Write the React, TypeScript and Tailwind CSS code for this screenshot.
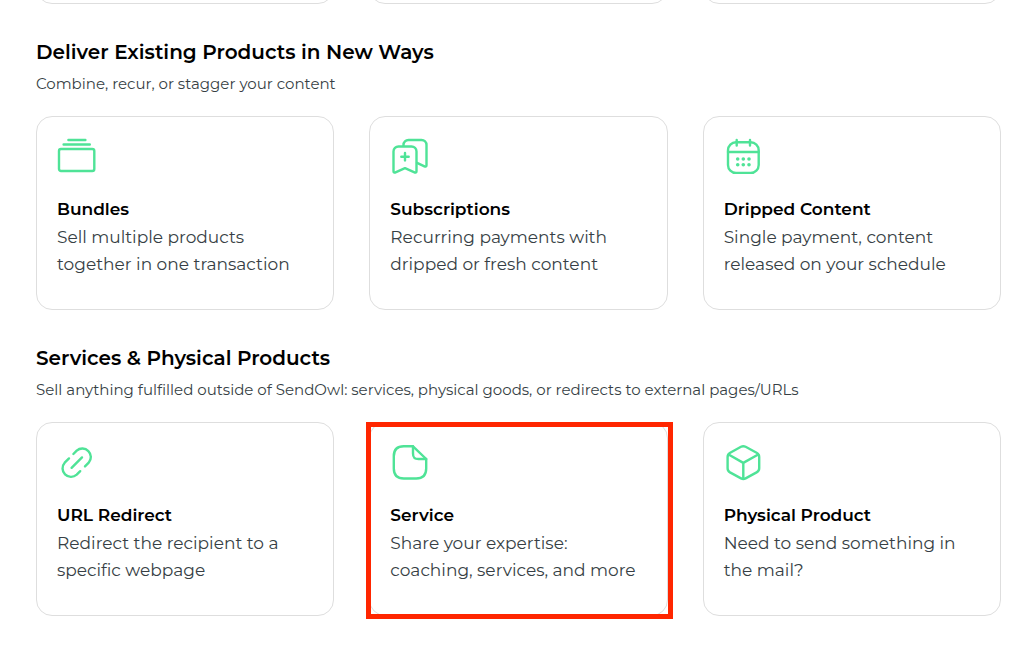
import { ReactNode } from "react"

type Product = {
    title: string
    description: string
    icon: ReactNode
    highlighted?: boolean
}

function Icon({ children }: { children: ReactNode }) {
    return (
        <svg
            viewBox="0 0 40 40"
            className="size-10 text-[#4fe397]"
            fill="none"
            stroke="currentColor"
            strokeWidth={2.4}
            strokeLinecap="round"
            strokeLinejoin="round"
            aria-hidden="true"
        >
            {children}
        </svg>
    )
}

const BundleIcon = (
    <Icon>
        <rect x="2" y="12" width="35.3" height="22" rx="2" />
        <path d="M6.6 7.5h26.2M11.4 3h17" />
    </Icon>
)

const SubscriptionIcon = (
    <Icon>
        <path d="M13.5 8.8V8a5 5 0 0 1 5-5h13a5 5 0 0 1 5 5v20.2c0 1.3-1 1.7-2 1.2L27 25.8" />
        <path d="M3.5 14.5a5 5 0 0 1 5-5h13a5 5 0 0 1 5 5v19.7c0 1.3-1 1.8-2 1.2L15 31.2l-9.5 4.2c-1 .6-2 .1-2-1.2z" />
        <path d="M15 16v7.4M11.3 19.7h7.4" />
    </Icon>
)

const CalendarIcon = (
    <Icon>
        <rect x="4" y="5.2" width="30.7" height="30.7" rx="8" />
        <path d="M4 15h30.7M12.7 3v5.6M26 3v5.6" />
        <g fill="currentColor" stroke="none">
            <circle cx="13.7" cy="22" r="1.8" />
            <circle cx="19.3" cy="22" r="1.8" />
            <circle cx="25" cy="22" r="1.8" />
            <circle cx="13.7" cy="27.7" r="1.8" />
            <circle cx="19.3" cy="27.7" r="1.8" />
            <circle cx="25" cy="27.7" r="1.8" />
        </g>
    </Icon>
)

const LinkIcon = (
    <Icon>
        <path d="M16.4 11L19.7 7.7A8.5 8.5 0 0 1 31.7 19.7L28 23.4" />
        <path d="M12 15.4L7.7 19.7A8.5 8.5 0 0 0 19.7 31.7L23.2 28.2" />
        <path d="M14.6 24.8L25 14.4" />
    </Icon>
)

const NoteIcon = (
    <Icon>
        <path d="M23 3.3h-9.2c-7 0-10 3-10 10v12.2c0 7 3 10 10 10h12.4c7 0 10-3 10-10V16z" />
        <path d="M23 3.3v7.2c0 4 1.4 5.5 5.5 5.5h7.7" />
    </Icon>
)

const BoxIcon = (
    <Icon>
        <path d="M17 3.8q2.3-1.2 4.6 0l11 6q2.6 1.4 2.6 4.2v11.2q0 2.8-2.6 4.2l-11 6q-2.3 1.2-4.6 0l-11-6Q3.6 28 3.6 25.2V14q0-2.8 2.6-4.2z" />
        <path d="M4.6 11.5l14.7 8.4 14.9-8.4M19.3 20v15.8" />
    </Icon>
)

const existingProducts: Product[] = [
    { title: "Bundles", description: "Sell multiple products together in one transaction", icon: BundleIcon },
    { title: "Subscriptions", description: "Recurring payments with dripped or fresh content", icon: SubscriptionIcon },
    { title: "Dripped Content", description: "Single payment, content released on your schedule", icon: CalendarIcon },
]

const services: Product[] = [
    { title: "URL Redirect", description: "Redirect the recipient to a specific webpage", icon: LinkIcon },
    { title: "Service", description: "Share your expertise: coaching, services, and more", icon: NoteIcon, highlighted: true },
    { title: "Physical Product", description: "Need to send something in the mail?", icon: BoxIcon },
]

function ProductCard({ title, description, icon, highlighted }: Product) {
    return (
        <li className="relative">
            <a href="#" className="block h-full rounded-2xl border border-[#dedede] bg-white px-5 pt-5 pb-[31px]">
                {icon}
                <h3 className="mt-[17px] text-[17px] leading-[30px] font-semibold text-black">{title}</h3>
                <p className="text-[17px] leading-[27px] text-[#373f45]">{description}</p>
            </a>
            {highlighted && (
                <span className="pointer-events-none absolute top-0 -right-[5px] -bottom-[3px] -left-[3px] border-5 border-[#ff2600]" />
            )}
        </li>
    )
}

function ProductSection({ title, subtitle, products }: { title: string; subtitle: string; products: Product[] }) {
    return (
        <section className="mt-[34px]">
            <h2 className="text-[20px] leading-7 font-semibold text-black">{title}</h2>
            <p className="mt-1.5 text-[15px] leading-6 text-[#373f45]">{subtitle}</p>
            <ul className="mt-5 grid grid-cols-3 gap-[35px]">
                {products.map(product => (
                    <ProductCard key={product.title} {...product} />
                ))}
            </ul>
        </section>
    )
}

export default function App() {
    return (
        <main className="min-h-screen bg-white pr-[31px] pb-8 pl-9 font-[Montserrat,Inter,sans-serif]">
            {/* Bottom edge of the row scrolled out above */}
            <div className="grid h-1 grid-cols-3 content-end gap-[35px] overflow-hidden">
                <div className="h-12 rounded-2xl border border-[#dedede]" />
                <div className="h-12 rounded-2xl border border-[#dedede]" />
                <div className="h-12 rounded-2xl border border-[#dedede]" />
            </div>

            <ProductSection
                title="Deliver Existing Products in New Ways"
                subtitle="Combine, recur, or stagger your content"
                products={existingProducts}
            />
            <ProductSection
                title="Services & Physical Products"
                subtitle="Sell anything fulfilled outside of SendOwl: services, physical goods, or redirects to external pages/URLs"
                products={services}
            />
        </main>
    )
}
